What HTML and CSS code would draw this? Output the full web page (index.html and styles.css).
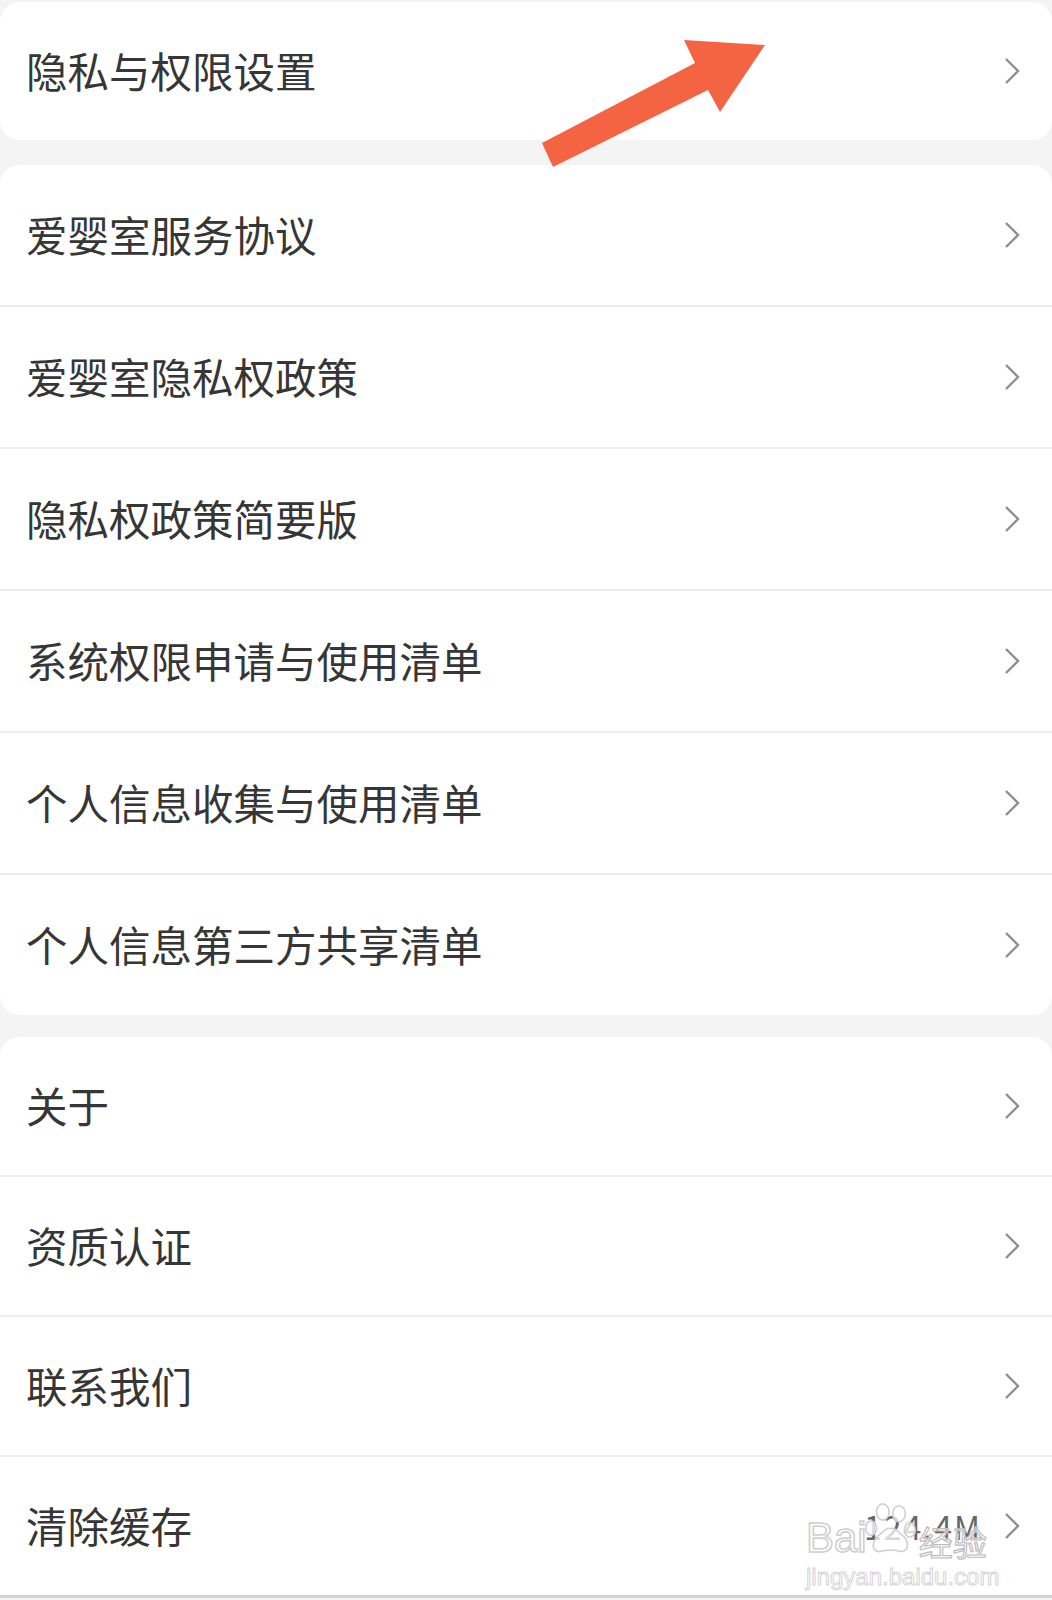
FILE: index.html
```html
<!DOCTYPE html>
<html lang="zh-CN">

<head>
    <meta charset="UTF-8">
    <meta name="viewport" content="width=device-width, initial-scale=1.0">
    <title>设置</title>
    <link rel="stylesheet" href="styles.css">
</head>

<body>
    <div class="group first">
        <div class="row">
            <span class="label">隐私与权限设置</span>
            <svg class="chev" viewBox="0 0 16 28"><polyline points="2,2 14,14 2,26" /></svg>
        </div>
    </div>

    <div class="group">
        <div class="row">
            <span class="label">爱婴室服务协议</span>
            <svg class="chev" viewBox="0 0 16 28"><polyline points="2,2 14,14 2,26" /></svg>
        </div>
        <div class="row">
            <span class="label">爱婴室隐私权政策</span>
            <svg class="chev" viewBox="0 0 16 28"><polyline points="2,2 14,14 2,26" /></svg>
        </div>
        <div class="row">
            <span class="label">隐私权政策简要版</span>
            <svg class="chev" viewBox="0 0 16 28"><polyline points="2,2 14,14 2,26" /></svg>
        </div>
        <div class="row">
            <span class="label">系统权限申请与使用清单</span>
            <svg class="chev" viewBox="0 0 16 28"><polyline points="2,2 14,14 2,26" /></svg>
        </div>
        <div class="row">
            <span class="label">个人信息收集与使用清单</span>
            <svg class="chev" viewBox="0 0 16 28"><polyline points="2,2 14,14 2,26" /></svg>
        </div>
        <div class="row">
            <span class="label">个人信息第三方共享清单</span>
            <svg class="chev" viewBox="0 0 16 28"><polyline points="2,2 14,14 2,26" /></svg>
        </div>
    </div>

    <div class="group last">
        <div class="row">
            <span class="label">关于</span>
            <svg class="chev" viewBox="0 0 16 28"><polyline points="2,2 14,14 2,26" /></svg>
        </div>
        <div class="row">
            <span class="label">资质认证</span>
            <svg class="chev" viewBox="0 0 16 28"><polyline points="2,2 14,14 2,26" /></svg>
        </div>
        <div class="row">
            <span class="label">联系我们</span>
            <svg class="chev" viewBox="0 0 16 28"><polyline points="2,2 14,14 2,26" /></svg>
        </div>
        <div class="row">
            <span class="label">清除缓存</span>
            <span class="value">124.4M</span>
            <svg class="chev" viewBox="0 0 16 28"><polyline points="2,2 14,14 2,26" /></svg>
            <!-- 水印 -->
            <div class="watermark">
                <div class="wm-top">
                    <span class="wm-bai">Bai</span>
                    <svg class="paw" viewBox="0 0 60 60">
                        <ellipse cx="22" cy="10" rx="7" ry="9" />
                        <ellipse cx="40" cy="12" rx="7" ry="9" />
                        <ellipse cx="9" cy="28" rx="6" ry="8" />
                        <ellipse cx="52" cy="30" rx="6" ry="8" />
                        <path d="M18 54 C8 54 10 40 20 34 C26 26 36 26 41 34 C52 40 52 54 42 54 C36 52 26 52 18 54 Z" />
                    </svg>
                    <span class="wm-cn">经验</span>
                </div>
                <div class="wm-url">jingyan.baidu.com</div>
            </div>
        </div>
    </div>

    <!-- 标注箭头 -->
    <svg class="arrow" width="230" height="135" viewBox="0 0 230 135">
        <polygon points="2,105 155,25 144,2 225,7 180,74 168,52 13,129" />
    </svg>
</body>

</html>
```

FILE: styles.css
```css
body {
    margin: 0;
    padding-top: 2px;
    background-color: #f4f4f4;
    font-family: "Noto Sans CJK SC", "Noto Sans", sans-serif;
    color: #333;
    overflow: hidden;
}

.group {
    background-color: #fff;
    border-radius: 20px;
    margin-bottom: 25px;
    overflow: hidden;
}

.group.last {
    margin-top: -3px;
    margin-bottom: 0;
    border-radius: 20px 20px 0 0;
    border-bottom: 3px solid #d4d4d4;
}

.row {
    position: relative;
    display: flex;
    align-items: center;
    height: 140px;
    padding: 0 32px 0 26px;
    border-top: 2px solid #ececec;
}

.group .row:first-child {
    border-top: none;
}

.group.first .row {
    height: 138px;
}

.group.last .row {
    height: 138px;
}

.label {
    flex: 1;
    font-size: 41.5px;
    line-height: 1;
    color: #363636;
}

.value {
    font-size: 32px;
    color: #666;
    margin-right: 22px;
    letter-spacing: 2px;
}

.chev {
    width: 16px;
    height: 28px;
}

.chev polyline {
    fill: none;
    stroke: #8f8f8f;
    stroke-width: 2.4;
}

/* 百度经验 水印 */
.watermark {
    position: absolute;
    left: 806px;
    top: 44px;
    width: 200px;
    pointer-events: none;
}

.wm-top {
    display: flex;
    align-items: flex-end;
    height: 58px;
}

.wm-bai {
    font-family: "Liberation Sans", sans-serif;
    font-size: 42px;
    line-height: 1;
    color: rgba(255, 255, 255, 0.8);
    -webkit-text-stroke: 1.6px #cfcfcf;
}

.paw {
    width: 54px;
    height: 58px;
    margin: 0 2px 0 -4px;
}

.paw ellipse,
.paw path {
    fill: rgba(255, 255, 255, 0.75);
    stroke: #cfcfcf;
    stroke-width: 1.8;
}

.wm-cn {
    font-size: 34px;
    line-height: 1;
    color: rgba(255, 255, 255, 0.6);
    -webkit-text-stroke: 1.2px #bdbdbd;
}

.wm-url {
    font-family: "Liberation Sans", sans-serif;
    font-size: 24px;
    color: #fff;
    -webkit-text-stroke: 1px #d6d6d6;
    margin-top: 4px;
}

.arrow {
    position: absolute;
    left: 540px;
    top: 38px;
}

.arrow polygon {
    fill: #f46442;
}
```
